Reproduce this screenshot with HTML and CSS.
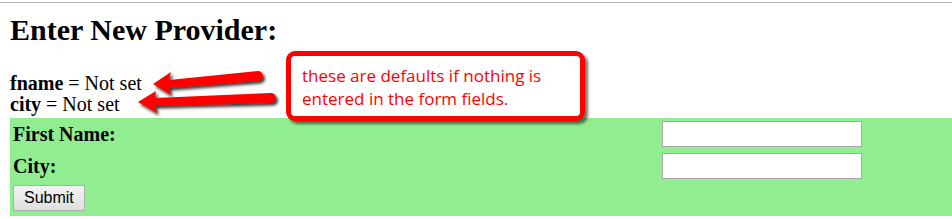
FILE: index.html
```html
<!DOCTYPE html>
<html lang="en">
<head>
<meta charset="UTF-8">
<title>Enter New Provider</title>
<link rel="stylesheet" href="styles.css">
</head>
<body>
<div class="page">
  <h2>Enter New Provider:</h2>
  <div class="values">
    <div><b>fname</b> = Not set</div>
    <div><b>city</b> = Not set</div>
  </div>
  <form>
    <table class="provider-form">
      <tr>
        <td class="label">First Name:</td>
        <td><input type="text" name="fname"></td>
      </tr>
      <tr>
        <td class="label">City:</td>
        <td><input type="text" name="city"></td>
      </tr>
      <tr>
        <td colspan="2"><button type="submit">Submit</button></td>
      </tr>
    </table>
  </form>

  <!-- annotation overlay -->
  <svg class="arrows" width="160" height="60" viewBox="0 0 160 60">
    <defs>
      <filter id="shadow" x="-10%" y="-30%" width="130%" height="180%">
        <feDropShadow dx="2" dy="2.5" stdDeviation="1.4" flood-color="#000" flood-opacity="0.8"/>
      </filter>
    </defs>
    <g fill="#ff0000" filter="url(#shadow)">
      <path d="M23 24 L41 12 L39 20 L128 11 A5 5 0 0 1 128 21 L39 28 L41 35 Z"/>
      <path d="M8 42 L26 31 L25 38 L141 33 A5 5 0 0 1 141 43 L25 46 L27 53 Z"/>
    </g>
  </svg>
  <div class="callout">these are defaults if nothing is<br>entered in the form fields.</div>
</div>
</body>
</html>
```

FILE: styles.css
```css
body {
  margin: 0;
  font-family: "Liberation Serif", "Times New Roman", serif;
  font-size: 20px;
  background-color: white;
}
.page {
  position: relative;
  border-top: 1px solid #b4b4b4;
  margin-top: 2px;
  padding-left: 10px;
}
h2 {
  margin: 0;
  padding-top: 10px;
  margin-bottom: 26px;
  font-size: 30px;
  line-height: 34px;
}
.values {
  line-height: 21px;
}
.provider-form {
  width: 100%;
  margin-top: 3px;
  background-color: #90ee90;
  border-collapse: separate;
  border-spacing: 2px;
  font-weight: bold;
}
.provider-form td {
  padding: 1px 1px 3px 1px;
  height: 26px;
}
.provider-form td.label {
  width: 645px;
}
.provider-form input {
  display: block;
  width: 200px;
  height: 26px;
  box-sizing: border-box;
  border: 1px solid #a9a9a9;
  margin: 0;
  padding: 2px;
}
.provider-form button {
  display: block;
  font-family: Arial, "Liberation Sans", sans-serif;
  font-size: 16px;
  height: 26px;
  padding: 0 10px;
  margin: 0;
  border: 1px solid #adadad;
  border-radius: 2px;
  background: linear-gradient(#f4f4f4, #dedede);
  color: #000;
}
.arrows {
  position: absolute;
  left: 130px;
  top: 57px;
  overflow: visible;
}
.callout {
  position: absolute;
  left: 286px;
  top: 48px;
  width: 299px;
  height: 70px;
  box-sizing: border-box;
  padding: 8px 6px 5px 11px;
  border: 5px solid #ff0000;
  border-radius: 9px;
  background-color: white;
  box-shadow: 3px 3px 3px rgba(0, 0, 0, 0.55);
  color: #ff0000;
  font-family: "Open Sans", "Noto Sans", sans-serif;
  font-size: 17px;
  line-height: 23px;
}
```
